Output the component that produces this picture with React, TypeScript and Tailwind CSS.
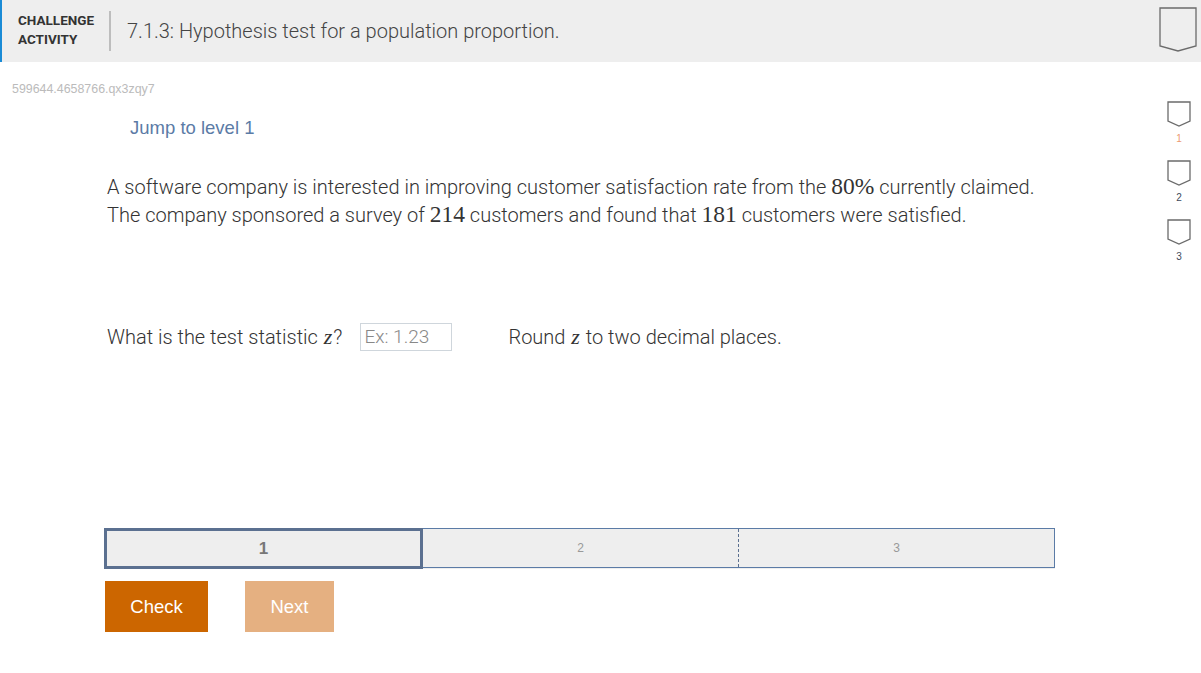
import React from 'react';

const Badge = ({ w, h }: { w: number; h: number }) => (
	<svg width={w} height={h} viewBox={`0 0 ${w} ${h}`} fill="none">
		<path
			d={`M1 1 H${w - 1} V${h - 6} L${w / 2} ${h - 1} L1 ${h - 6} Z`}
			stroke="#6b6b6b"
			strokeWidth="1.3"
		/>
	</svg>
);

const M = ({ children }: { children: React.ReactNode }) => (
	<span className="font-['Liberation_Serif',serif] text-[23.5px] leading-none text-[#333]">{children}</span>
);

const Z = () => (
	<span className="font-['Liberation_Serif',serif] italic text-[22px] leading-none text-[#333] px-[1px]">z</span>
);

export default function App() {
	return (
		<div className="w-[1201px] h-[673px] bg-white font-['Roboto',sans-serif] overflow-hidden">
			<header className="h-[62px] bg-[#eeeeee] border-l-2 border-[#1a8bd6] flex items-center">
				<div className="pl-4 w-[107px] mt-[-2px] text-[13.5px] font-bold leading-[19px] text-[#333]">
					CHALLENGE
					<br />
					ACTIVITY
				</div>
				<div className="w-[2px] h-[40px] bg-[#bdbdbd]" />
				<h1 className="ml-4 text-[20px] font-light text-[#444]">
					7.1.3: Hypothesis test for a population proportion.
				</h1>
				<div className="ml-auto mr-[4px] mt-[-4px]">
					<Badge w={38} h={45} />
				</div>
			</header>

			<div className="flex">
				<main className="flex-1">
					<div className="pl-3 pt-[21px] text-[12.4px] text-[#bbb] font-['Liberation_Sans',sans-serif] leading-[13px]">
						599644.4658766.qx3zqy7
					</div>
					<div className="pl-[130px] pt-[22px] text-[18.5px] text-[#5b7ba6] font-['Liberation_Sans',sans-serif] leading-[20px]">
						Jump to level 1
					</div>

					<div className="pl-[107px] pt-[35px] text-[20px] font-light text-[#333] leading-[28px]">
						<p>
							A software company is interested in improving customer satisfaction rate from the <M>80%</M>{' '}
							currently claimed.
						</p>
						<p>
							The company sponsored a survey of <M>214</M> customers and found that <M>181</M> customers
							were satisfied.
						</p>
					</div>

					<div className="pl-[107px] pt-[94px] h-[28px] box-content flex items-center text-[20px] font-light text-[#333]">
						<span>
							What is the test statistic <Z />?
						</span>
						<div className="ml-[18px] w-[92px] h-[28px] border border-[#cfd6dc] flex items-center pl-[3px] text-[19px] text-[#888] font-light">
							Ex: 1.23
						</div>
						<span className="ml-[56px]">
							Round <Z /> to two decimal places.
						</span>
					</div>

					<div className="ml-[104px] mt-[177px] w-[951px] h-[41px] flex bg-[#eeeeee]">
						<div className="w-[319px] h-full border-[3px] border-[#5b7090] flex items-center justify-center text-[17px] font-bold text-[#777] font-['Liberation_Sans',sans-serif]">
							1
						</div>
						<div className="flex-1 h-[40px] border border-l-0 border-[#5b7ba6] flex text-[12px] text-[#999] font-['Liberation_Sans',sans-serif]">
							<div className="flex-1 flex items-center justify-center border-r border-dashed border-[#5b7090]">
								2
							</div>
							<div className="flex-1 flex items-center justify-center">3</div>
						</div>
					</div>

					<div className="ml-[105px] mt-[12px] flex gap-[37px] font-['Liberation_Sans',sans-serif] text-[18.5px] text-white">
						<button className="w-[103px] h-[51px] bg-[#cc6600]">Check</button>
						<button className="w-[89px] h-[51px] bg-[#e5b081]">Next</button>
					</div>
				</main>

				<aside className="w-[52px] pt-[39px] flex flex-col items-center text-[10px] font-['Liberation_Sans',sans-serif]">
					{['1', '2', '3'].map((n, i) => (
						<div key={n} className="flex flex-col items-center mb-[15px] ml-[8px]">
							<Badge w={24} h={26} />
							<span className={`mt-[6px] leading-[12px] ${i === 0 ? 'text-[#ec9a72]' : 'text-[#3d4a5c]'}`}>{n}</span>
						</div>
					))}
				</aside>
			</div>
		</div>
	);
}
